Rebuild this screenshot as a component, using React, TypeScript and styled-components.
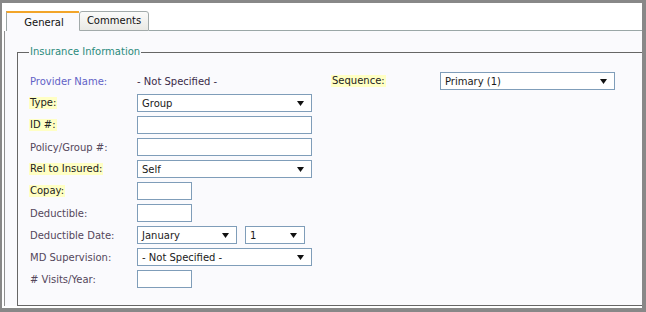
import React from 'react';
import styled, { createGlobalStyle } from 'styled-components';

const GlobalStyle = createGlobalStyle`
	html, body {
		margin: 0;
		padding: 0;
		background: #888888;
		font-family: "DejaVu Sans", Verdana, sans-serif;
	}
	* {
		box-sizing: border-box;
	}
`

interface SelectProps {
	width: number;
	value: string;
}

const Arrow = () => (
	<svg width="7" height="5" viewBox="0 0 7 5">
		<polygon points="0,0 7,0 3.5,5" fill="#111" />
	</svg>
);

const FakeSelect = ({ width, value }: SelectProps) => (
	<SelectBox $w={width}>
		<span>{value}</span>
		<Arrow />
	</SelectBox>
);

export default function App() {
	return (
		<>
			<GlobalStyle />
			<Frame>
				<TabStrip>
					<Tab $active>General</Tab>
					<Tab>Comments</Tab>
					<StripFill />
				</TabStrip>
				<Panel>
					<Fieldset>
						<Legend>Insurance Information</Legend>
						<FormGrid>
							<Label $tone="blue">Provider Name:</Label>
							<Value>- Not Specified -</Value>
							<Label><Mark>Sequence:</Mark></Label>
							<FakeSelect width={175} value="Primary (1)" />

							<Label><Mark>Type:</Mark></Label>
							<Cell><FakeSelect width={175} value="Group" /></Cell>

							<Label><Mark>ID #:</Mark></Label>
							<Cell><TextBox $w={175} /></Cell>

							<Label>Policy/Group #:</Label>
							<Cell><TextBox $w={175} /></Cell>

							<Label><Mark>Rel to Insured:</Mark></Label>
							<Cell><FakeSelect width={175} value="Self" /></Cell>

							<Label><Mark>Copay:</Mark></Label>
							<Cell><TextBox $w={55} /></Cell>

							<Label>Deductible:</Label>
							<Cell><TextBox $w={55} /></Cell>

							<Label>Deductible Date:</Label>
							<Cell>
								<Pair>
									<FakeSelect width={100} value="January" />
									<FakeSelect width={60} value="1" />
								</Pair>
							</Cell>

							<Label>MD Supervision:</Label>
							<Cell><FakeSelect width={175} value="- Not Specified -" /></Cell>

							<Label># Visits/Year:</Label>
							<Cell><TextBox $w={55} /></Cell>
						</FormGrid>
					</Fieldset>
				</Panel>
			</Frame>
		</>
	);
}

const Frame = styled.div`
	display: flex;
	flex-direction: column;
	margin: 3px 4px 0 2px;
	height: 305px;
	padding: 0 0 2px 2px;
	background: #ffffff;
`

const TabStrip = styled.div`
	display: flex;
	align-items: flex-end;
	height: 28px;
	padding-left: 2px;
	flex-shrink: 0;
`

const Tab = styled.div<{ $active?: boolean }>`
	display: flex;
	align-items: center;
	justify-content: center;
	height: 20px;
	font-size: 10px;
	color: #111;
	${p => p.$active ? `
		width: 73px;
		padding-top: 1px;
		padding-left: 2px;
		background: #fafafd;
		border-top: 2px solid #f2a52a;
		border-left: 1px solid #9aa3a3;
	` : `
		width: 70px;
		background: linear-gradient(#fbfbfa, #e9e9e5);
		border: 1px solid #a2aaaa;
		border-radius: 3px 3px 0 0;
		padding-bottom: 1px;
	`}
`

const StripFill = styled.div`
	flex: 1;
	border-bottom: 1px solid #9aa7a7;
`

const Panel = styled.div`
	flex: 1;
	overflow: hidden;
	background: #fafafd;
	border-left: 1px solid #8f8f8f;
	padding: 14px 0 0 12px;
`

const Fieldset = styled.fieldset`
	margin: 0;
	min-width: 720px;
	width: 720px;
	border: 1px solid #666666;
	border-right: none;
	padding: 13px 0 17px 12px;
`

const Legend = styled.legend`
	margin-left: -1px;
	padding: 0 1px;
	font-size: 10px;
	line-height: 14px;
	color: #2b8a7c;
`

const FormGrid = styled.div`
	display: grid;
	grid-template-columns: 107px 195px 108px 175px;
	grid-auto-rows: 18px;
	row-gap: 4px;
	font-size: 10px;
`

const Label = styled.div<{ $tone?: 'blue' }>`
	display: flex;
	align-items: center;
	color: ${p => p.$tone === 'blue' ? '#6262c6' : '#54475b'};
	white-space: nowrap;
`

const Mark = styled.span`
	background: #ffffc4;
	color: #222222;
	line-height: 12px;
	padding: 0 1px;
	margin-left: -1px;
`

const Value = styled.div`
	display: flex;
	align-items: center;
	color: #3a2a48;
`

const Cell = styled.div`
	grid-column: 2 / span 3;
	display: flex;
`

const Pair = styled.div`
	display: flex;
	gap: 8px;
`

const SelectBox = styled.div<{ $w: number }>`
	width: ${p => p.$w}px;
	height: 18px;
	display: flex;
	align-items: center;
	justify-content: space-between;
	padding: 0 7px 0 4px;
	border: 1px solid #7f9db9;
	background: #ffffff;
	color: #1a1a1a;
	font-size: 10px;
	white-space: nowrap;
`

const TextBox = styled.div<{ $w: number }>`
	width: ${p => p.$w}px;
	height: 18px;
	border: 1px solid #7f9db9;
	background: #ffffff;
`
